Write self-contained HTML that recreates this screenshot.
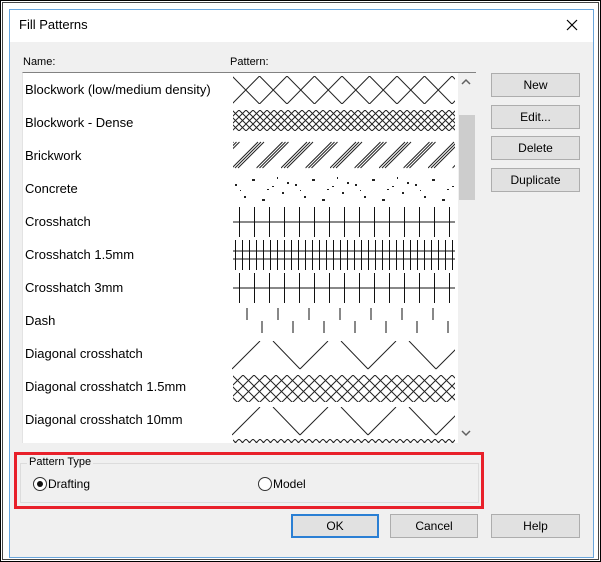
<!DOCTYPE html>
<html><head><style>
body{margin:0;width:601px;height:562px;background:#fff;position:relative;overflow:hidden;font-family:"Liberation Sans",sans-serif;font-size:12px;color:#000}
.abs{position:absolute}
.btn{position:absolute;background:#e1e1e1;border:1px solid #adadad;box-sizing:border-box;text-align:center;line-height:22px;font-size:12px}
.name{position:absolute;left:25px;font-size:13px}
</style></head><body>
<div class="abs" style="left:0;top:0;width:599px;height:560px;border:1px solid #000"></div>
<div class="abs" style="left:2px;top:2px;width:595px;height:556px;border:1px solid #444"></div>
<div class="abs" style="left:9px;top:9px;width:583px;height:547px;border:1px solid #6aa6dc;background:#f0f0f0"></div>
<div class="abs" style="left:10px;top:10px;width:583px;height:32px;background:#fff"></div>
<div class="abs" style="left:19px;top:17px;font-size:13px">Fill Patterns</div>
<svg class="abs" style="left:566px;top:19px" width="12" height="12"><path d="M1 1L11 11M11 1L1 11" stroke="#000" stroke-width="1.2"/></svg>
<div class="abs" style="left:23px;top:56px;font-size:11px">Name:</div>
<div class="abs" style="left:230px;top:56px;font-size:11px">Pattern:</div>
<div class="abs" style="left:22px;top:72px;width:454px;height:371px;background:#fff;border-top:1px solid #828282;border-left:1px solid #e3e3e3;box-sizing:border-box"></div>
<div class="abs" style="left:458px;top:73px;width:18px;height:370px;background:#f0f0f0"></div>
<div class="abs" style="left:459px;top:115px;width:16px;height:85px;background:#cdcdcd"></div>
<svg class="abs" style="left:460px;top:78px" width="12" height="8"><path d="M2 6L6 2L10 6" stroke="#606060" fill="none" stroke-width="1.5"/></svg>
<svg class="abs" style="left:460px;top:429px" width="12" height="8"><path d="M2 2L6 6L10 2" stroke="#606060" fill="none" stroke-width="1.5"/></svg>
<div class="name" style="top:82px">Blockwork (low/medium density)</div>
<div class="name" style="top:115px">Blockwork - Dense</div>
<div class="name" style="top:148px">Brickwork</div>
<div class="name" style="top:181px">Concrete</div>
<div class="name" style="top:214px">Crosshatch</div>
<div class="name" style="top:247px">Crosshatch 1.5mm</div>
<div class="name" style="top:280px">Crosshatch 3mm</div>
<div class="name" style="top:313px">Dash</div>
<div class="name" style="top:346px">Diagonal crosshatch</div>
<div class="name" style="top:379px">Diagonal crosshatch 1.5mm</div>
<div class="name" style="top:412px">Diagonal crosshatch 10mm</div>
<svg class="abs" style="left:232px;top:74px" width="224" height="369" stroke="#222" stroke-width="1" fill="none">
<defs>
<pattern id="p0" width="27.5" height="28" patternUnits="userSpaceOnUse"><path d="M0 0L27.5 28M27.5 0L0 28"/></pattern>
<pattern id="p1" width="7" height="7" patternUnits="userSpaceOnUse"><path d="M0 0L7 7M7 0L0 7"/></pattern>
<pattern id="p2" width="24.5" height="30" patternUnits="userSpaceOnUse"><path d="M0 28L26 2M3 28L29 2M6 28L32 2M-24.5 28L1.5 2M-21.5 28L4.5 2M-18.5 28L7.5 2"/></pattern>
<pattern id="p4" width="15" height="30" patternUnits="userSpaceOnUse"><path d="M0 15H15M7.5 0V30" stroke="#111"/></pattern>
<pattern id="p5" width="7" height="30" patternUnits="userSpaceOnUse"><path d="M0 11H7M0 19H7M3.5 0V30" stroke="#111"/></pattern>
<pattern id="p7" width="31" height="30" patternUnits="userSpaceOnUse"><path d="M15 2V14M30 15V27" stroke="#111"/></pattern>
<pattern id="p8" width="68" height="30" patternUnits="userSpaceOnUse"><path d="M0 28L28 0M41 0L68 28"/></pattern>
<pattern id="p9" width="11" height="11" patternUnits="userSpaceOnUse"><path d="M0 0L11 11M11 0L0 11"/></pattern>
<pattern id="p3" width="60" height="30" patternUnits="userSpaceOnUse" stroke="none" fill="#222"><rect x="3" y="10" width="2" height="2"/><rect x="20" y="5" width="3" height="2"/><rect x="40" y="12" width="2" height="1"/><rect x="12" y="22" width="2" height="2"/><rect x="30" y="25" width="3" height="2"/><rect x="50" y="18" width="2" height="2"/><rect x="45" y="3" width="1" height="2"/><rect x="8" y="16" width="1" height="1"/><rect x="35" y="15" width="2" height="1"/><rect x="55" y="8" width="2" height="2"/></pattern>
</defs>
<g transform="translate(0,2)"><rect x="1" y="0" width="222" height="28" fill="url(#p0)" stroke="none"/></g>
<g transform="translate(0,36)"><rect x="1" y="0" width="222" height="21" fill="url(#p1)" stroke="none"/></g>
<g transform="translate(0,66)"><rect x="1" y="0" width="222" height="30" fill="url(#p2)" stroke="none"/></g>
<g transform="translate(0,100)"><rect x="1" y="0" width="222" height="30" fill="url(#p3)" stroke="none"/></g>
<g transform="translate(0,133)"><rect x="1" y="0" width="222" height="30" fill="url(#p4)" stroke="none"/></g>
<g transform="translate(0,166)"><rect x="1" y="0" width="222" height="30" fill="url(#p5)" stroke="none"/></g>
<g transform="translate(0,199)"><rect x="1" y="0" width="222" height="30" fill="url(#p4)" stroke="none"/></g>
<g transform="translate(0,232)"><rect x="1" y="0" width="222" height="30" fill="url(#p7)" stroke="none"/></g>
<g transform="translate(0,267)"><rect x="0" y="0" width="223" height="29" fill="url(#p8)" stroke="none"/></g>
<g transform="translate(0,301)"><rect x="1" y="0" width="222" height="27" fill="url(#p9)" stroke="none"/></g>
<g transform="translate(0,333)"><rect x="0" y="0" width="223" height="29" fill="url(#p8)" stroke="none"/></g>
<g transform="translate(0,365)"><rect x="1" y="0" width="222" height="4" fill="url(#p1)" stroke="none"/></g>
</svg>
<div class="btn" style="left:491px;top:73px;width:89px;height:24px">New</div>
<div class="btn" style="left:491px;top:105px;width:89px;height:24px">Edit...</div>
<div class="btn" style="left:491px;top:136px;width:89px;height:24px">Delete</div>
<div class="btn" style="left:491px;top:168px;width:89px;height:24px">Duplicate</div>
<div class="abs" style="left:20px;top:463px;width:457px;height:38px;border:1px solid #dcdcdc"></div>
<div class="abs" style="left:27px;top:456px;background:#f0f0f0;padding:0 2px;font-size:11px">Pattern Type</div>
<div class="abs" style="left:33px;top:477px;width:14px;height:14px;border:1px solid #333;border-radius:50%;box-sizing:border-box;background:#fff"></div>
<div class="abs" style="left:37px;top:481px;width:6px;height:6px;border-radius:50%;background:#111"></div>
<div class="abs" style="left:48px;top:477px;font-size:12px">Drafting</div>
<div class="abs" style="left:258px;top:477px;width:14px;height:14px;border:1px solid #333;border-radius:50%;box-sizing:border-box;background:#fff"></div>
<div class="abs" style="left:273px;top:477px;font-size:12px">Model</div>
<div class="abs" style="left:14px;top:452px;width:470px;height:57px;border:3px solid #e8202a;box-sizing:border-box"></div>
<div class="btn" style="left:291px;top:514px;width:88px;height:24px;border:2px solid #2a7fd4;line-height:20px">OK</div>
<div class="btn" style="left:390px;top:514px;width:88px;height:24px">Cancel</div>
<div class="btn" style="left:491px;top:514px;width:89px;height:24px">Help</div>
</body></html>
